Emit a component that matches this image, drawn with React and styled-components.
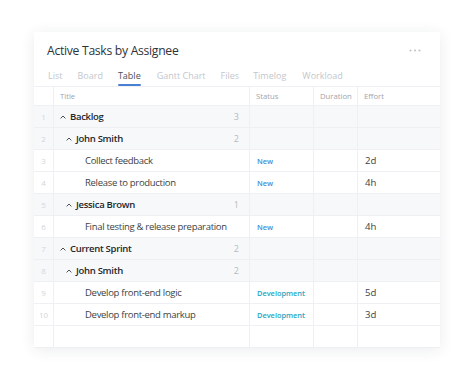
import React from 'react';
import styled, { createGlobalStyle } from 'styled-components';

const GlobalStyle = createGlobalStyle`
  html, body {
    margin: 0;
    padding: 0;
    background: #ffffff;
    font-family: 'Open Sans', 'Noto Sans', sans-serif;
  }
`;

const Page = styled.div`
  padding: 32px 0 0 34px;
  width: 474px;
  height: 380px;
  box-sizing: border-box;
`;

const Card = styled.div`
  width: 406px;
  height: 316px;
  background: #fff;
  box-shadow: 0 2px 14px rgba(30, 40, 60, 0.09);
  display: flex;
  flex-direction: column;
  overflow: hidden;
`;

const CardHeader = styled.div`
  display: flex;
  align-items: center;
  justify-content: space-between;
  height: 36px;
  padding: 3px 19px 0 13px;
  box-sizing: border-box;
`;

const CardTitle = styled.div`
  font-size: 12.2px;
  color: #2f3338;
  letter-spacing: -0.3px;
`;

const Tabs = styled.div`
  display: flex;
  padding-left: 14px;
  height: 20px;
`;

const Tab = styled.div`
  font-size: 9px;
  color: ${p => (p.$active ? '#4c5057' : '#c3c7cd')};
  margin-right: ${p => p.$gap}px;
  padding-top: 2px;
  position: relative;
  &::after {
    content: '';
    display: ${p => (p.$active ? 'block' : 'none')};
    position: absolute;
    left: 0;
    right: 0;
    bottom: 0;
    height: 2px;
    border-radius: 1px;
    background: #4a80d4;
  }
`;

const Table = styled.div`
  display: grid;
  grid-template-columns: 19px 196px 64px 44px 1fr;
  border-top: 1px solid #eef0f3;
`;

const Cell = styled.div`
  height: ${p => (p.$head ? 18 : 21)}px;
  border-bottom: 1px solid #eef0f3;
  border-left: ${p => (p.$first ? 'none' : '1px solid #eef0f3')};
  background: ${p => (p.$group ? '#f7f8fa' : '#fff')};
  display: flex;
  align-items: center;
  box-sizing: content-box;
  padding: 0 ${p => p.$pr || 0}px 0 ${p => p.$pl || 0}px;
  min-width: 0;
`;

const HeadText = styled.span`
  font-size: 7.7px;
  color: #9fa4ab;
`;

const RowNum = styled.span`
  width: 100%;
  text-align: center;
  font-size: 8px;
  color: #d3d6da;
`;

const TitleText = styled.span`
  flex: 1;
  font-size: 9.5px;
  letter-spacing: -0.3px;
  color: ${p => (p.$bold ? '#23272c' : '#3b3f45')};
  font-weight: ${p => (p.$bold ? 600 : 400)};
  white-space: nowrap;
`;

const Count = styled.span`
  font-size: 9px;
  color: #b6bac0;
`;

const Status = styled.span`
  font-size: 7.4px;
  font-weight: 600;
  color: ${p => (p.$dev ? '#1ea6c4' : '#3f8ed8')};
`;

const Effort = styled.span`
  font-size: 9.6px;
  color: #3b3f45;
`;

const Chevron = styled.svg`
  width: 6px;
  height: 4px;
  margin-right: 4px;
  flex: none;
`;

const Dots = () => (
  <svg width="12" height="3" viewBox="0 0 12 3">
    <circle cx="1.5" cy="1.5" r="1.1" fill="#c2c5ca" />
    <circle cx="6" cy="1.5" r="1.1" fill="#c2c5ca" />
    <circle cx="10.5" cy="1.5" r="1.1" fill="#c2c5ca" />
  </svg>
);

const tabs = [
  { name: 'List', gap: 15 },
  { name: 'Board', gap: 15 },
  { name: 'Table', gap: 16, active: true },
  { name: 'Gantt Chart', gap: 15 },
  { name: 'Files', gap: 14 },
  { name: 'Timelog', gap: 16 },
  { name: 'Workload', gap: 0 }
];

const rows = [
  { title: 'Backlog', level: 0, group: true, count: 3 },
  { title: 'John Smith', level: 1, group: true, count: 2 },
  { title: 'Collect feedback', level: 2, status: 'New', effort: '2d' },
  { title: 'Release to production', level: 2, status: 'New', effort: '4h' },
  { title: 'Jessica Brown', level: 1, group: true, count: 1 },
  { title: 'Final testing & release preparation', level: 2, status: 'New', effort: '4h' },
  { title: 'Current Sprint', level: 0, group: true, count: 2 },
  { title: 'John Smith', level: 1, group: true, count: 2 },
  { title: 'Develop front-end logic', level: 2, status: 'Development', effort: '5d' },
  { title: 'Develop front-end markup', level: 2, status: 'Development', effort: '3d' }
];

const indent = [6, 12, 31];

const App = () => {
  return (
    <Page>
      <GlobalStyle />
      <Card>
        <CardHeader>
          <CardTitle>Active Tasks by Assignee</CardTitle>
          <Dots />
        </CardHeader>
        <Tabs>
          {tabs.map(t => (
            <Tab key={t.name} $active={t.active} $gap={t.gap}>
              {t.name}
            </Tab>
          ))}
        </Tabs>
        <Table>
          <Cell $head $first />
          <Cell $head $pl={6}>
            <HeadText>Title</HeadText>
          </Cell>
          <Cell $head $pl={6}>
            <HeadText>Status</HeadText>
          </Cell>
          <Cell $head $pl={6}>
            <HeadText>Duration</HeadText>
          </Cell>
          <Cell $head $pl={6}>
            <HeadText>Effort</HeadText>
          </Cell>

          {rows.map((row, i) => (
            <React.Fragment key={i}>
              <Cell $first $group={row.group}>
                <RowNum>{i + 1}</RowNum>
              </Cell>
              <Cell $group={row.group} $pl={indent[row.level]} $pr={10}>
                {row.group && (
                  <Chevron viewBox="0 0 6 4">
                    <polyline
                      points="0.6,3.4 3,1 5.4,3.4"
                      fill="none"
                      stroke="#4a4e55"
                      strokeWidth="1"
                    />
                  </Chevron>
                )}
                <TitleText $bold={row.group}>{row.title}</TitleText>
                {row.group && <Count>{row.count}</Count>}
              </Cell>
              <Cell $group={row.group} $pl={7}>
                {row.status && (
                  <Status $dev={row.status === 'Development'}>{row.status}</Status>
                )}
              </Cell>
              <Cell $group={row.group} />
              <Cell $group={row.group} $pl={7}>
                {row.effort && <Effort>{row.effort}</Effort>}
              </Cell>
            </React.Fragment>
          ))}

          <Cell $first />
          <Cell />
          <Cell />
          <Cell />
          <Cell />
        </Table>
      </Card>
    </Page>
  );
};

export default App;
